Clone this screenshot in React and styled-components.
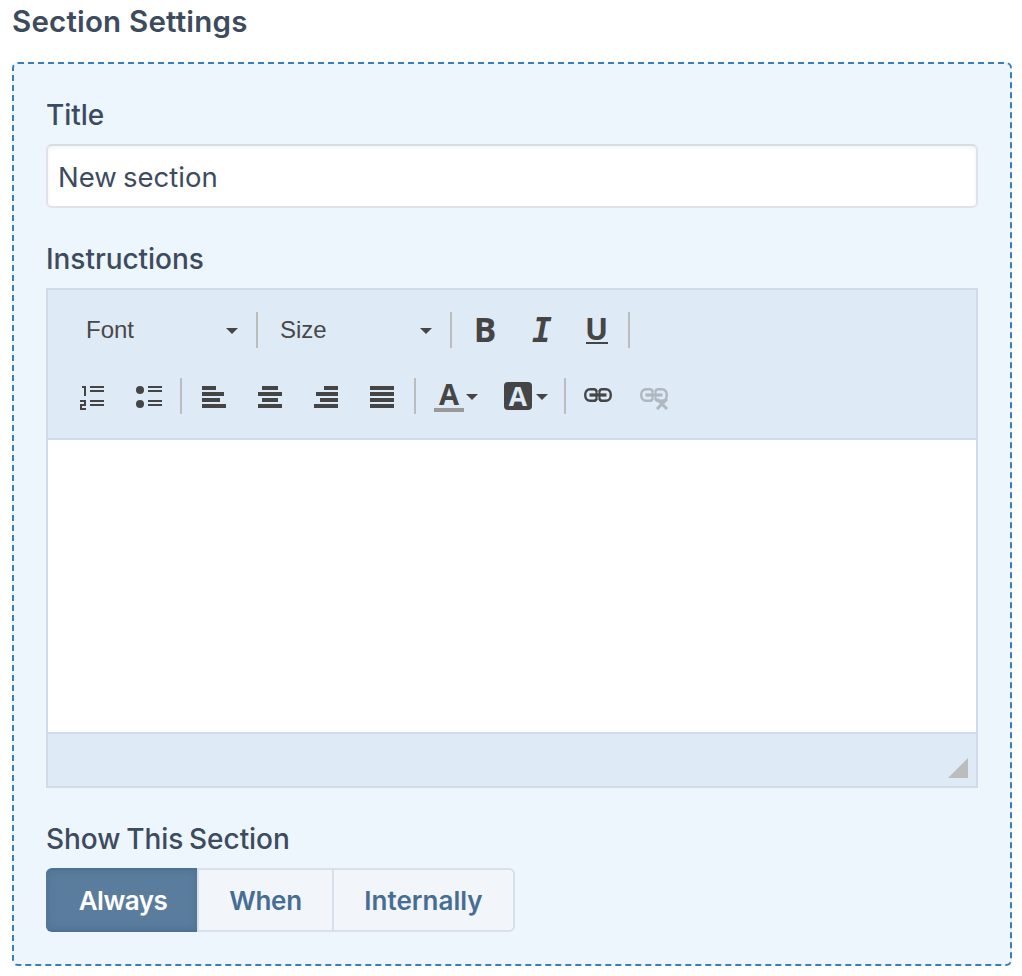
import React from "react";
import styled, { createGlobalStyle } from "styled-components";

const Global = createGlobalStyle`
  *, *::before, *::after { box-sizing: border-box; }
  body { margin: 0; background: #fff; color: #3d4b5f; font-family: Inter, "Liberation Sans", sans-serif; }
`;

const Page = styled.main`
  width: 1022px;
  height: 976px;
  padding: 3px 10px 10px 12px;
  overflow: hidden;
`;

const Heading = styled.h1`
  margin: 0 0 23px;
  font-size: 29.5px;
  line-height: 36px;
  font-weight: 600;
  letter-spacing: 0.2px;
  white-space: nowrap;
`;

const Panel = styled.section`
  height: 904px;
  padding: 32px;
  border: 2px dashed #397eb9;
  border-radius: 6px;
  background: #edf5fd;
`;

const Label = styled.div`
  height: 48px;
  padding-top: 1px;
  font-size: 28px;
  line-height: 36px;
  font-weight: 500;
  letter-spacing: -0.05px;
  word-spacing: -1.6px;
  white-space: nowrap;
`;

const TitleInput = styled.input`
  display: block;
  width: 100%;
  height: 64px;
  margin-bottom: 32px;
  padding: 2px 10px 0;
  border: 2px solid #dfe3e7;
  border-top-color: #d8dde1;
  border-radius: 6px;
  background: #fff;
  box-shadow: inset 0 2px 4px rgba(0, 0, 0, 0.05);
  color: #3d4b5f;
  font: 400 27.5px/36px Inter, "Liberation Sans", sans-serif;
  letter-spacing: 0;
  word-spacing: -1.5px;
  outline: none;
`;

const Editor = styled.div`
  display: flex;
  flex-direction: column;
  height: 500px;
  margin-bottom: 32px;
  border: 2px solid #d0dce9;
  background: #deeaf6;
`;

const Toolbar = styled.div`
  display: flex;
  flex-direction: column;
  gap: 30px;
  height: 150px;
  padding: 22px 16px 0;
  border-bottom: 2px solid #d0dce9;
`;

const ToolRow = styled.div`
  display: flex;
  height: 36px;
`;

const Separator = styled.span`
  width: 2px;
  height: 36px;
  margin: 0 4px;
  background: #bcbcbc;
`;

const Combo = styled.button`
  display: flex;
  align-items: center;
  justify-content: space-between;
  width: 184px;
  height: 36px;
  margin-left: ${(p) => (p.$first ? "4px" : "0")};
  padding: 0 14px 0 18px;
  border: 0;
  background: none;
  color: #484848;
  font: 24px/36px "Liberation Sans", sans-serif;

  svg { margin-top: 2px; }
`;

const ToolButton = styled.button`
  display: block;
  width: ${(p) => p.$width || 56}px;
  height: 36px;
  padding: 0;
  border: 0;
  background: none;
  color: #454545;
  opacity: ${(p) => (p.disabled ? 0.3 : 1)};

  svg { display: block; overflow: visible; }
`;

const Glyph = styled.text`
  fill: ${(p) => p.$color || "currentColor"};
  font-family: ${(p) => (p.$italic ? '"DejaVu Sans Mono", monospace' : '"Open Sans", "Noto Sans", sans-serif')};
  font-weight: 700;
  font-style: ${(p) => (p.$italic ? "italic" : "normal")};
  font-size: ${(p) => p.$size}px;
  text-anchor: middle;
`;

const Content = styled.div`
  flex: 1;
  background: #fff;
`;

const Footer = styled.div`
  display: flex;
  align-items: flex-end;
  justify-content: flex-end;
  height: 54px;
  padding: 8px;
  border-top: 2px solid #d0dce9;
`;

const Segments = styled.div`
  display: flex;
  height: 64px;
`;

const Segment = styled.button`
  width: ${(p) => p.$width}px;
  padding: 2px 0 0 ${(p) => (p.$active ? "3px" : "0")};
  border: 2px solid ${(p) => (p.$active ? "#4b7195" : "#d8e1ea")};
  border-left-width: ${(p) => (p.$active ? "0" : "2px")};
  border-right-width: ${(p) => (p.$last ? "2px" : "0")};
  border-radius: ${(p) => (p.$active ? "6px 0 0 6px" : p.$last ? "0 6px 6px 0" : "0")};
  background: ${(p) => (p.$active ? "#5b7d9d" : "#f2f6fa")};
  box-shadow: ${(p) => (p.$active ? "inset 0 0 10px #4b7195" : "none")};
  color: ${(p) => (p.$active ? "#fff" : "#466d93")};
  font: 600 26px/36px Inter, "Liberation Sans", sans-serif;
  letter-spacing: ${(p) => p.$spacing}px;
`;

const Caret = () => (
  <svg width="12" height="6" viewBox="0 0 12 6">
    <path d="M0 0h12l-6 6z" fill="#454545" />
  </svg>
);

const Icon = ({ width = 56, children }) => (
  <svg width={width} height="36" viewBox={`0 0 ${width} 36`} fill="currentColor">
    {children}
  </svg>
);

const Align = ({ rows }) => (
  <Icon>
    {rows.map(([x, w], i) => (
      <rect key={i} x={x} y={8 + i * 6} width={w} height="4" />
    ))}
  </Icon>
);

const Chain = () => (
  <g fill="none" stroke="currentColor" strokeWidth="2.4">
    <path d="M26.500 13.500C26.300 12 25.200 11.200 23.800 11.200h-3.600c-3 0-5 2.300-5 5.800s2 5.800 5 5.800h3.600c1.400 0 2.500-.8 2.700-2.300" />
    <path d="M29.500 13.500c.2-1.500 1.300-2.300 2.700-2.300h3.600c3 0 5 2.300 5 5.800s-2 5.800-5 5.800h-3.600c-1.400 0-2.500-.8-2.700-2.300" />
    <path d="M26.500 12.500v9M29.500 12.500v9" strokeWidth="2" />
    <path d="M19.500 17h17" strokeWidth="3.200" strokeLinecap="butt" />
  </g>
);

export default function App() {
  return (
    <Page>
      <Global />
      <Heading>Section Settings</Heading>
      <Panel>
        <Label>Title</Label>
        <TitleInput defaultValue="New section" />
        <Label>Instructions</Label>
        <Editor>
          <Toolbar>
            <ToolRow>
              <Combo $first>Font<Caret /></Combo>
              <Separator />
              <Combo>Size<Caret /></Combo>
              <Separator />
              <ToolButton aria-label="Bold">
                <Icon><Glyph x="29" y="30" $size={33.6}>B</Glyph></Icon>
              </ToolButton>
              <ToolButton aria-label="Italic">
                <Icon><Glyph x="30" y="30" $size={33} $italic>I</Glyph></Icon>
              </ToolButton>
              <ToolButton aria-label="Underline">
                <Icon>
                  <Glyph x="28.500" y="27.500" $size={30.5}>U</Glyph>
                  <rect x="18" y="30" width="22" height="2" />
                </Icon>
              </ToolButton>
              <Separator />
            </ToolRow>
            <ToolRow>
              <ToolButton aria-label="Numbered list">
                <Icon>
                  <path d="M18 8h4v10h-2v-8h-2zM16 22h6v6h-4v2h4v2h-6v-6h4v-2h-4z" />
                  <path d="M26 8h14v2H26zM26 12h14v2H26zM26 22h14v2H26zM26 26h14v2H26z" />
                </Icon>
              </ToolButton>
              <ToolButton aria-label="Bulleted list">
                <Icon>
                  <circle cx="20" cy="12" r="4" />
                  <circle cx="20" cy="26" r="4" />
                  <path d="M28 8h14v2H28zM28 12h14v2H28zM28 22h14v2H28zM28 26h14v2H28z" />
                </Icon>
              </ToolButton>
              <Separator />
              <ToolButton aria-label="Align left"><Align rows={[[16, 14], [16, 22], [16, 18], [16, 24]]} /></ToolButton>
              <ToolButton aria-label="Center"><Align rows={[[20, 16], [16, 24], [20, 16], [16, 24]]} /></ToolButton>
              <ToolButton aria-label="Align right"><Align rows={[[26, 14], [18, 22], [22, 18], [16, 24]]} /></ToolButton>
              <ToolButton aria-label="Justify"><Align rows={[[16, 24], [16, 24], [16, 24], [16, 24]]} /></ToolButton>
              <Separator />
              <ToolButton $width={70} aria-label="Text color">
                <Icon width={70}>
                  <Glyph x="29" y="27" $size={29}>A</Glyph>
                  <rect x="14" y="30" width="30" height="4" fill="#999" />
                  <path d="M46 16h12l-6 6z" />
                </Icon>
              </ToolButton>
              <ToolButton $width={70} aria-label="Background color">
                <Icon width={70}>
                  <rect x="14" y="4" width="28" height="28" rx="4" />
                  <Glyph x="28" y="28" $size={26.5} $color="#deeaf6">A</Glyph>
                  <path d="M46 16h12l-6 6z" />
                </Icon>
              </ToolButton>
              <Separator />
              <ToolButton aria-label="Link"><Icon><Chain /></Icon></ToolButton>
              <ToolButton disabled aria-label="Unlink">
                <Icon>
                  <Chain />
                  <path d="M31 21l10 10M41 21l-10 10" stroke="currentColor" strokeWidth="3" />
                </Icon>
              </ToolButton>
            </ToolRow>
          </Toolbar>
          <Content />
          <Footer>
            <svg width="20" height="20" viewBox="0 0 20 20"><path d="M20 0v20H0z" fill="#bcbcbc" /></svg>
          </Footer>
        </Editor>
        <Label>Show This Section</Label>
        <Segments>
          <Segment $width={151} $active $spacing={-0.5}>Always</Segment>
          <Segment $width={135} $spacing={-0.3}>When</Segment>
          <Segment $width={183} $last $spacing={0.05}>Internally</Segment>
        </Segments>
      </Panel>
    </Page>
  );
}
